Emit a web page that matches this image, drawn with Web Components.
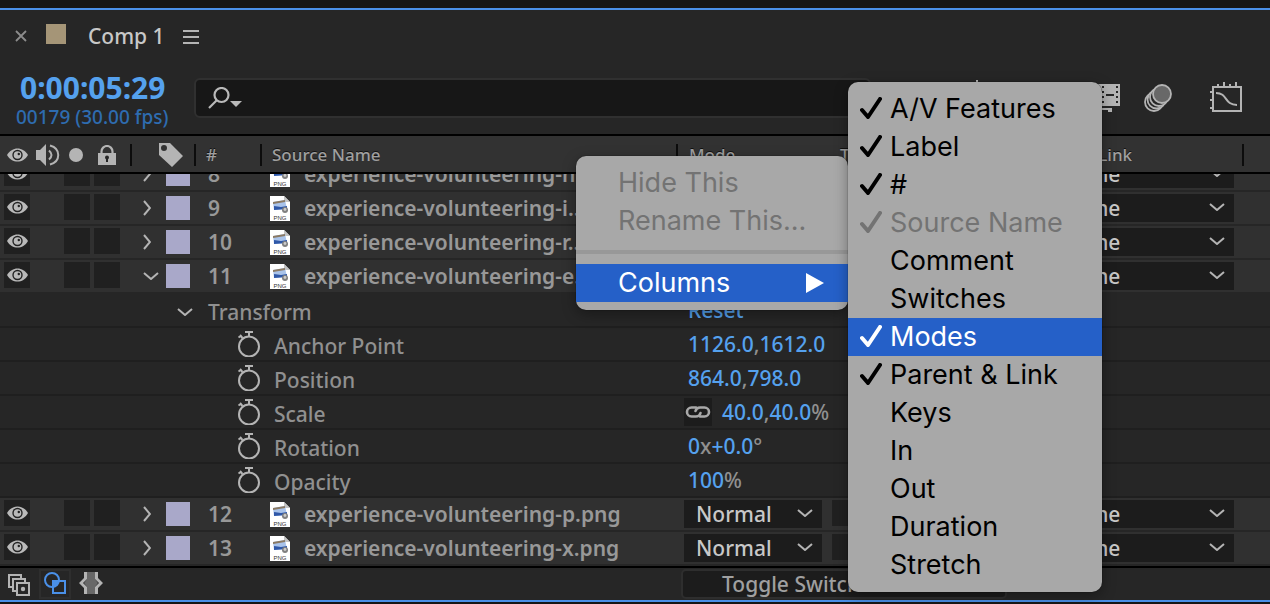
<!DOCTYPE html>
<html lang="en">
<head>
<meta charset="utf-8">
<title>Comp 1</title>
<style>
  body {
    margin: 0;
    background: #161616;
    color: #a0a0a0;
    font-family: "Noto Sans", "Open Sans", sans-serif;
    font-size: 21px;
    font-weight: 500;
  }
</style>
</head>
<body>
<timeline-panel></timeline-panel>

<script>
const ICONS = {
  close: ["12 12", `<path d="M1 1l10 10M11 1l-10 10" fill="none" stroke="#8c8c8c" stroke-width="1.8"/>`],
  burger: ["16 14", `<path d="M0 1h16M0 7h16M0 13h16" stroke="#b4b4b4" stroke-width="2"/>`],
  search: ["34 22", `<g fill="none" stroke="#b9b9b9" stroke-width="2.2"><circle cx="13.500" cy="8" r="7"/><path d="M8.500 13.500L1 21"/></g><path d="M22 14h12l-6 6z" fill="#b9b9b9"/>`],
  eye: ["21 14", `<path d="M0 7C5-1.800 16-1.800 21 7C16 15.800 5 15.800 0 7z" fill="#b9b9b9"/><circle cx="10.500" cy="7" r="5.200" fill="#222"/><circle cx="10.500" cy="7" r="3.800" fill="#b9b9b9"/><circle cx="11.800" cy="6" r="1.200" fill="#222"/>`],
  speaker: ["24 22", `<path d="M0 6h4l6-6v22l-6-6H0z" fill="#b4b4b4"/><path d="M13 6.500q5 4.500 0 9M14 1.500c11 3 11 16 0 19" fill="none" stroke="#b4b4b4" stroke-width="2"/>`],
  dot: ["16 14", `<circle cx="8" cy="7" r="7" fill="#b4b4b4"/>`],
  lock: ["18 20", `<path d="M0 8h18v12H0z" fill="#b4b4b4"/><path d="M3.500 8V6.500a5.500 5.500 0 0 1 11 0V8" fill="none" stroke="#b4b4b4" stroke-width="2.200"/><circle cx="9" cy="12.500" r="2" fill="#262626"/><path d="M8 13h2v4H8z" fill="#262626"/>`],
  tag: ["24 24", `<path fill-rule="evenodd" d="M0 0h11l13 13-11 11L0 12zM5 2a3 3 0 1 0 0 6a3 3 0 1 0 0-6z" fill="#b4b4b4"/>`],
  right: ["8 16", `<path d="M1 1l6 7-6 7" fill="none" stroke="#b4b4b4" stroke-width="2"/>`],
  down: ["16 8", `<path d="M1 1l7 6 7-6" fill="none" stroke="#b4b4b4" stroke-width="2"/>`],
  png: ["20 25", `<path d="M0 0h14l6 6v19H0z" fill="#fff"/><path d="M14 0v6h6z" fill="#c4c4c4"/><path d="M3 6l12-2 2 9-13 1z" fill="#a9c3ea"/><path d="M3 6l12-2v2l-12 2z" fill="#8b7a63"/><path d="M4 10l7 1 6-1v3l-13 1z" fill="#2f58a8"/><circle cx="15" cy="14" r="3" fill="#808080"/><circle cx="15" cy="13.500" r="1.400" fill="#ccc"/><text x="10" y="23.500" text-anchor="middle" font-family="Liberation Sans, sans-serif" font-size="6" font-weight="400" fill="#333">PNG</text>`],
  watch: ["24 26", `<g fill="none" stroke="#b4b4b4" stroke-width="2"><circle cx="12" cy="15.500" r="10"/><path d="M8 1h8M12 1v5M1.500 6.500l3-2M3 4l2.500 3"/></g>`],
  link: ["26 14", `<g fill="none" stroke="#a8a8a8" stroke-width="2.600" stroke-linecap="round"><path d="M11 2.500H6.500a4.500 4.500 0 0 0 0 9H11q3.500 0 4.500-3.500"/><path d="M15 11.500h4.500a4.500 4.500 0 0 0 0-9H15q-3.500 0-4.500 3.500"/></g>`],
  shy: ["26 32", `<path d="M13 0v8M3 16h20M13 16v14" stroke="#b4b4b4" stroke-width="2"/><circle cx="13" cy="14" r="6" fill="#b4b4b4"/>`],
  film: ["30 28", `<path d="M0 0h30v22H0z" fill="#b4b4b4"/><path d="M16 11h8" stroke="#262626" stroke-width="2"/><path d="M27 2v18M13 2v18" stroke="#262626" stroke-width="2" stroke-dasharray="2 3"/><path d="M8 24h14v4h-4v-2H8z" fill="#b4b4b4"/>`],
  blur: ["28 28", `<g fill="#262626" stroke="#b4b4b4" stroke-width="1.800"><circle cx="10" cy="18" r="9"/><circle cx="12.500" cy="15.500" r="9"/><circle cx="15" cy="13" r="9"/><circle cx="18" cy="10" r="9" fill="#686868"/></g>`],
  graph: ["32 30", `<g fill="none" stroke="#b4b4b4" stroke-width="2"><path d="M3 5h28v24H3z"/><path d="M8 5V2M14 5V0M20 5V2M26 5V0M3 10H0M3 18H0M3 26H0"/><path d="M6 11c12 0 8 12 21 12"/></g>`],
  stack: ["22 22", `<g fill="#262626" stroke="#b4b4b4" stroke-width="2"><path d="M1 1h12v12H1z"/><path d="M5 5h12v12H5z"/><path d="M9 9h12v12H9z"/></g><circle cx="15" cy="15" r="2.200" fill="#b4b4b4"/>`],
  shapes: ["22 22", `<path d="M9 9h6a7 7 0 0 1-6 6z" fill="#4a90e8"/><g fill="none" stroke="#4a90e8" stroke-width="2"><circle cx="8" cy="8" r="7"/><path d="M9 9h12v12H9z"/></g>`],
  braces: ["24 22", `<path d="M8 0h8v7l3 4-3 4v7H8v-7l-3-4 3-4z" fill="#686868"/><path d="M5 0h3v7l-4 4 4 4v7H5v-6L0 11l5-5zM19 0h-3v7l4 4-4 4v7h3v-6l5-5-5-5z" fill="#b4b4b4"/>`],
  check: ["22 22", `<path d="M2 13l6 7L20 2" fill="none" stroke="currentColor" stroke-width="4" stroke-linecap="round" stroke-linejoin="round"/>`],
  play: ["18 20", `<path d="M0 0l18 10-18 10z" fill="currentColor"/>`]
};

// shared by every row and by the column header
const COLUMNS = "132px 64px 66px minmax(0, 1fr) 154px 168px 244px 26px";

function icon(name) {
  const [size, body] = ICONS[name];
  const [w, h] = size.split(" ");
  return `<svg width="${w}" height="${h}" viewBox="0 0 ${size}" aria-hidden="true">${body}</svg>`;
}

class BaseElement extends HTMLElement {
  constructor() {
    super();
    this.attachShadow({ mode: "open" });
  }
  connectedCallback() {
    const template = document.createElement("template");
    template.innerHTML = `
      <style>
        * { box-sizing: border-box; }
        :host { display: block; box-sizing: border-box; }
        svg { display: block; flex: none; }
        button {
          display: block;
          padding: 0;
          border: 0;
          background: none;
          color: inherit;
          font: inherit;
        }
      </style>
      ${this.markup()}
    `;
    this.shadowRoot.appendChild(document.importNode(template.content, true));
  }
}

class CompTab extends BaseElement {
  markup() {
    return `
      <style>
        :host {
          display: flex;
          align-items: center;
          height: 54px;
          padding: 0 15px 2px;
          color: #c8c8c8;
        }
        .swatch {
          width: 20px;
          height: 20px;
          margin: 0 22px 4px 19px;
          background: #a59577;
        }
        .menu { margin: 2px 0 0 18px; }
      </style>
      <button aria-label="Close">${icon("close")}</button>
      <span class="swatch"></span>
      <slot></slot>
      <button class="menu" aria-label="Panel menu">${icon("burger")}</button>
    `;
  }
}
customElements.define("comp-tab", CompTab);

class CompToolbar extends BaseElement {
  markup() {
    return `
      <style>
        :host {
          display: flex;
          align-items: flex-start;
          height: 70px;
        }
        .time {
          width: 194px;
          padding-left: 16px;
        }
        .code {
          padding: 8px 0 0 4px;
          line-height: 32px;
          font-size: 30px;
          font-weight: bold;
          color: #55a1ee;
        }
        .frames {
          line-height: 26px;
          font-size: 19px;
          color: #2e6cb0;
        }
        .search {
          flex: 1;
          display: flex;
          align-items: center;
          height: 40px;
          margin-top: 14px;
          padding: 0 12px;
          border: 2px solid #303030;
          border-radius: 6px;
          background: #171717;
        }
        input {
          flex: 1;
          min-width: 0;
          margin-left: 8px;
          border: 0;
          outline: 0;
          background: none;
          color: inherit;
          font: inherit;
        }
        .switches {
          display: flex;
          width: 399px;
          padding: 16px 28px 0 0;
          justify-content: flex-end;
          align-items: flex-start;
        }
        .shy { margin-right: 100px; }
        .film { margin: 4px 24px 0 0; }
        .blur { margin: 4px 38px 0 0; }
        .graph { margin-top: 2px; }
      </style>
      <div class="time">
        <div class="code">0:00:05:29</div>
        <div class="frames">00179 (30.00 fps)</div>
      </div>
      <label class="search">${icon("search")}<input type="text" aria-label="Search"></label>
      <div class="switches">
        <button class="shy" aria-label="Shy layers">${icon("shy")}</button>
        <button class="film" aria-label="Frame blending">${icon("film")}</button>
        <button class="blur" aria-label="Motion blur">${icon("blur")}</button>
        <button class="graph" aria-label="Graph editor">${icon("graph")}</button>
      </div>
    `;
  }
}
customElements.define("comp-toolbar", CompToolbar);

class ColumnHeader extends BaseElement {
  markup() {
    return `
      <style>
        :host {
          display: grid;
          grid-template-columns: ${COLUMNS};
          height: 40px;
          border: solid #000;
          border-width: 2px 0;
          background: #323232;
          font-size: 17px;
          text-shadow: 0 -1px #111;
        }
        div {
          display: flex;
          align-items: center;
          height: 22px;
          margin: 8px 0;
          padding: 0 0 2px 10px;
          white-space: nowrap;
        }
        .line {
          border-right: 2px solid #0c0c0c;
        }
        .icons { padding-bottom: 0; }
        .av { padding-left: 7px; gap: 8px; }
        .av :last-child { margin-left: 6px; }
        .label { padding-left: 27px; }
        .mode { padding-left: 11px; }
        .matte { padding-left: 8px; }
        .parent { padding-left: 23px; }
      </style>
      <div class="line icons av">${icon("eye")}${icon("speaker")}${icon("dot")}${icon("lock")}</div>
      <div class="line icons label">${icon("tag")}</div>
      <div class="line">#</div>
      <div class="line">Source Name</div>
      <div class="mode">Mode</div>
      <div class="matte">T&nbsp; TrkMat</div>
      <div class="line parent">Parent &amp; Link</div>
    `;
  }
}
customElements.define("column-header", ColumnHeader);

class DropDown extends BaseElement {
  markup() {
    const value = this.getAttribute("value");
    return `
      <style>
        :host { height: 28px; }
        label {
          display: flex;
          align-items: center;
          height: 28px;
          padding-right: 9px;
          background: #1c1c1c;
        }
        select {
          appearance: none;
          flex: 1;
          min-width: 0;
          height: 28px;
          padding: 0 0 0 12px;
          border: 0;
          background: none;
          color: #c8c8c8;
          font: inherit;
        }
        svg { margin-bottom: 2px; }
      </style>
      <label><select aria-label="${this.getAttribute("name")}"><option>${value}</option></select>${icon("down")}</label>
    `;
  }
}
customElements.define("drop-down", DropDown);

class LayerRow extends BaseElement {
  markup() {
    return `
      <style>
        :host {
          display: grid;
          grid-template-columns: ${COLUMNS};
          height: 34px;
          padding-top: 2px;
          border-bottom: 2px solid #262626;
          background: #303030;
          color: #989898;
          font-weight: 600;
          line-height: 28px;
        }
        .av { display: flex; gap: 4px; padding-left: 4px; }
        .cell {
          width: 26px;
          height: 26px;
          padding: 6px 3px;
          background: #202020;
        }
        .gap { width: 26px; }
        .label {
          display: flex;
          align-items: center;
          justify-content: flex-end;
          height: 28px;
          padding-right: 6px;
        }
        .label button { width: 23px; }
        .swatch { width: 24px; height: 24px; background: #a9a8c9; }
        .num { padding-left: 12px; }
        .name {
          display: flex;
          align-items: center;
          gap: 14px;
          height: 28px;
          padding-left: 8px;
          white-space: nowrap;
        }
        drop-down { font-weight: 500; }
        .mode { padding: 0 10px 0 6px; }
        .matte { display: flex; gap: 4px; }
        .matte .wide { flex: none; width: 100px; }
        .parent { padding: 0 10px 0 54px; }
      </style>
      <div class="av">
        <button class="cell" aria-label="Video">${icon("eye")}</button>
        <span class="gap"></span>
        <button class="cell" aria-label="Solo"></button>
        <button class="cell" aria-label="Lock"></button>
      </div>
      <div class="label">
        <button aria-label="Expand layer">${icon(this.hasAttribute("open") ? "down" : "right")}</button>
        <span class="swatch"></span>
      </div>
      <div class="num">${this.getAttribute("num")}</div>
      <div class="name">${icon("png")}<slot></slot></div>
      <div class="mode"><drop-down name="Mode" value="Normal"></drop-down></div>
      <div class="matte"><span class="cell"></span><span class="cell wide"></span></div>
      <div class="parent"><drop-down name="Parent" value="None"></drop-down></div>
    `;
  }
}
customElements.define("layer-row", LayerRow);

class PropertyRow extends BaseElement {
  markup() {
    const group = this.hasAttribute("group");
    return `
      <style>
        :host {
          display: grid;
          grid-template-columns: minmax(0, 1fr) 592px;
          height: 34px;
          border-bottom: 2px solid #1f1f1f;
          background: #262626;
          line-height: 32px;
          color: #909090;
        }
        .name {
          display: flex;
          align-items: center;
          gap: 13px;
          padding: 2px 0 0 237px;
        }
        .name.group { gap: 15px; padding-left: 177px; }
        .watch { margin-top: -4px; }
        .value {
          display: flex;
          align-items: center;
          padding: 0 0 2px 10px;
        }
        .link {
          width: 28px;
          height: 28px;
          margin: 0 10px 0 -4px;
          padding: 7px 1px;
          background: #1c1c1c;
        }
        ::slotted(a) {
          color: #55a1ee;
          text-decoration: none;
        }
      </style>
      <div class="name ${group ? "group" : ""}">
        <button class="${group ? "" : "watch"}" aria-label="${group ? "Collapse" : "Toggle animation"}">${icon(group ? "down" : "watch")}</button>
        ${this.getAttribute("name")}
      </div>
      <div class="value">
        ${this.hasAttribute("linked") ? `<button class="link" aria-label="Constrain proportions">${icon("link")}</button>` : ""}
        <slot></slot>
      </div>
    `;
  }
}
customElements.define("property-row", PropertyRow);

class PanelFooter extends BaseElement {
  markup() {
    return `
      <style>
        :host {
          display: flex;
          height: 34px;
          border-top: 2px solid #000;
        }
        .stack { padding: 2px 9px 0 8px; }
        .shapes {
          width: 32px;
          height: 30px;
          margin-top: 1px;
          border: 2px solid #2e2e2e;
          padding: 0 3px 2px;
        }
        .braces { margin-left: 8px; padding-bottom: 2px; }
        .toggle {
          width: 326px;
          height: 30px;
          margin: 1px 263px 0 auto;
          padding-left: 39px;
          border: 2px solid #2e2e2e;
          border-radius: 5px;
          background: #1c1c1c;
          line-height: 26px;
          text-align: left;
        }
      </style>
      <button class="stack" aria-label="Layer switches pane">${icon("stack")}</button>
      <button class="shapes" aria-label="Transfer controls pane">${icon("shapes")}</button>
      <button class="braces" aria-label="In and out pane">${icon("braces")}</button>
      <button class="toggle">Toggle Switches / Modes</button>
    `;
  }
}
customElements.define("panel-footer", PanelFooter);

class MenuEntry extends BaseElement {
  markup() {
    return `
      <style>
        button {
          display: flex;
          align-items: center;
          width: 100%;
          height: 38px;
          padding: 0 24px 2px 42px;
          text-align: left;
          color: #000;
        }
        .check {
          width: 22px;
          margin: 0 8px 0 -30px;
        }
        .play { margin: 2px 0 0 auto; }
        :host([disabled]) button { color: #737373; }
        :host([selected]) button { background: #2560c8; color: #fff; }
      </style>
      <button role="menuitem" ${this.hasAttribute("disabled") ? "disabled" : ""}>
        ${this.hasAttribute("checked") ? `<span class="check">${icon("check")}</span>` : ""}
        <slot></slot>
        ${this.hasAttribute("submenu") ? `<span class="play">${icon("play")}</span>` : ""}
      </button>
    `;
  }
}
customElements.define("menu-entry", MenuEntry);

class PopupMenu extends BaseElement {
  markup() {
    return `
      <style>
        :host {
          padding: 8px 0;
          border-radius: 10px;
          background: #a8a8a8;
          box-shadow: 0 0 1px #000, 0 4px 14px rgba(0, 0, 0, .35);
          font-family: Inter, Roboto, sans-serif;
          font-size: 27px;
          font-weight: 400;
          white-space: nowrap;
        }
        ::slotted(hr) {
          height: 4px;
          margin: 10px 0;
          border: 0;
          background: #989898;
        }
      </style>
      <slot></slot>
    `;
  }
}
customElements.define("popup-menu", PopupMenu);

class TimelinePanel extends BaseElement {
  markup() {
    return `
      <style>
        :host {
          position: relative;
          margin-top: 8px;
          border: solid #4a90e8;
          border-width: 2px 0;
          background: #262626;
        }
        .layers { overflow: hidden; }
        /* list is scrolled by half a row */
        .list { margin-top: -16px; }
        .context, .columns { position: absolute; }
        .context { top: 146px; right: 422px; width: 272px; }
        .columns { top: 72px; right: 168px; width: 254px; }
      </style>
      <comp-tab>Comp 1</comp-tab>
      <comp-toolbar></comp-toolbar>
      <column-header></column-header>
      <div class="layers">
        <div class="list">
          <layer-row num="8">experience-volunteering-n...</layer-row>
          <layer-row num="9">experience-volunteering-i...</layer-row>
          <layer-row num="10">experience-volunteering-r...</layer-row>
          <layer-row num="11" open>experience-volunteering-e...</layer-row>
          <property-row name="Transform" group><a href="#">Reset</a></property-row>
          <property-row name="Anchor Point"><a href="#">1126.0</a>,<a href="#">1612.0</a></property-row>
          <property-row name="Position"><a href="#">864.0</a>,<a href="#">798.0</a></property-row>
          <property-row name="Scale" linked><a href="#">40.0</a>,<a href="#">40.0</a>%</property-row>
          <property-row name="Rotation"><a href="#">0</a>x<a href="#">+0.0</a>°</property-row>
          <property-row name="Opacity"><a href="#">100</a>%</property-row>
          <layer-row num="12">experience-volunteering-p.png</layer-row>
          <layer-row num="13">experience-volunteering-x.png</layer-row>
        </div>
      </div>
      <panel-footer></panel-footer>
      <popup-menu class="context" role="menu">
        <menu-entry disabled>Hide This</menu-entry>
        <menu-entry disabled>Rename This...</menu-entry>
        <hr>
        <menu-entry selected submenu>Columns</menu-entry>
      </popup-menu>
      <popup-menu class="columns" role="menu">
        <menu-entry checked>A/V Features</menu-entry>
        <menu-entry checked>Label</menu-entry>
        <menu-entry checked>#</menu-entry>
        <menu-entry checked disabled>Source Name</menu-entry>
        <menu-entry>Comment</menu-entry>
        <menu-entry>Switches</menu-entry>
        <menu-entry checked selected>Modes</menu-entry>
        <menu-entry checked>Parent &amp; Link</menu-entry>
        <menu-entry>Keys</menu-entry>
        <menu-entry>In</menu-entry>
        <menu-entry>Out</menu-entry>
        <menu-entry>Duration</menu-entry>
        <menu-entry>Stretch</menu-entry>
      </popup-menu>
    `;
  }
}
customElements.define("timeline-panel", TimelinePanel);
</script>
</body>
</html>
